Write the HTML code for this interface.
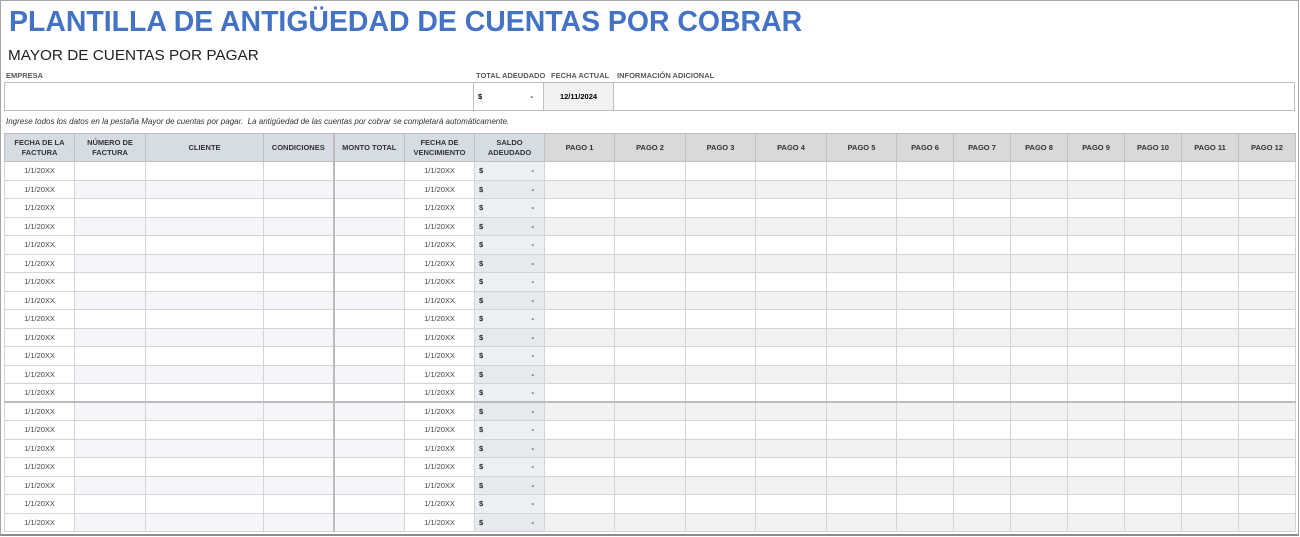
<!DOCTYPE html>
<html><head><meta charset="utf-8"><style>
*{margin:0;padding:0;box-sizing:border-box}
body{width:1300px;height:537px;background:#fff;font-family:"Liberation Sans",sans-serif;position:relative;overflow:hidden}
.frame{position:absolute;left:0;top:0;width:1299px;height:536px;border:1px solid #a6a6a6;border-bottom:2px solid #8c8c8c}
.title{position:absolute;left:9px;top:6px;font-size:29px;font-weight:bold;color:#4472c4;white-space:nowrap;transform-origin:0 0;transform:scaleX(0.98)}
.sub{position:absolute;left:8px;top:47px;font-size:15px;color:#222;white-space:nowrap;transform-origin:0 0;transform:scaleX(1.02)}
.lbl{position:absolute;top:71px;font-size:7.5px;font-weight:bold;color:#595959;white-space:nowrap}
.box{position:absolute;top:82px;height:29px;border:1px solid #bfbfbf;border-left:none}
.note{position:absolute;left:6px;top:117px;font-size:8px;font-style:italic;color:#333;white-space:nowrap}
table{position:absolute;left:4px;top:133px;border-collapse:collapse;table-layout:fixed;width:1291px}
td,th{border:1px solid #d4d4d4;font-size:7.5px;height:18.5px;text-align:center;color:#444;white-space:nowrap;overflow:hidden}
th{height:28px;font-weight:bold;color:#333;background:#d6dce4;line-height:10px;border-color:#c0c0c0}
th.p{background:#d9d9d9}
tr.s td.b{background:#f4f6f9}
tr.s td.p{background:#f2f2f2}
td.sa{background:#eceff4;text-align:left;padding:0 10px 0 4px;font-weight:bold;color:#222}
tr.s td.sa{background:#e6e9ee}
td.sa span{float:right}
.tk{border-right:2px solid #bcbcbc}
tr.mid td{border-top:2px solid #bcbcbc}
</style></head><body>
<div class="frame"></div>
<div class="title">PLANTILLA DE ANTIGÜEDAD DE CUENTAS POR COBRAR</div>
<div class="sub">MAYOR DE CUENTAS POR PAGAR</div>
<div class="lbl" style="left:6px">EMPRESA</div>
<div class="lbl" style="left:476px">TOTAL ADEUDADO</div>
<div class="lbl" style="left:551px">FECHA ACTUAL</div>
<div class="lbl" style="left:617px">INFORMACIÓN ADICIONAL</div>
<div class="box" style="left:4px;width:470px;border-left:1px solid #bfbfbf"></div>
<div class="box" style="left:474px;width:70px;font-size:7.5px;font-weight:bold;line-height:27px;padding:0 10px 0 4px">$<span style="float:right">-</span></div>
<div class="box" style="left:544px;width:70px;background:#f2f2f2;font-size:7.5px;font-weight:bold;line-height:27px;text-align:center">12/11/2024</div>
<div class="box" style="left:614px;width:681px"></div>
<div class="note">Ingrese todos los datos en la pestaña Mayor de cuentas por pagar.&nbsp; La antigüedad de las cuentas por cobrar se completará automáticamente.</div>
<table>
<colgroup><col style="width:70px"><col style="width:71px"><col style="width:118px"><col style="width:70px"><col style="width:71px"><col style="width:70px"><col style="width:70px"><col style="width:70px"><col style="width:71px"><col style="width:70px"><col style="width:71px"><col style="width:70px"><col style="width:57px"><col style="width:57px"><col style="width:57px"><col style="width:57px"><col style="width:57px"><col style="width:57px"><col style="width:57px"></colgroup>
<tr><th>FECHA DE LA<br>FACTURA</th><th>NÚMERO DE<br>FACTURA</th><th>CLIENTE</th><th class="tk">CONDICIONES</th><th>MONTO TOTAL</th><th>FECHA DE<br>VENCIMIENTO</th><th>SALDO<br>ADEUDADO</th><th class="p">PAGO 1</th><th class="p">PAGO 2</th><th class="p">PAGO 3</th><th class="p">PAGO 4</th><th class="p">PAGO 5</th><th class="p">PAGO 6</th><th class="p">PAGO 7</th><th class="p">PAGO 8</th><th class="p">PAGO 9</th><th class="p">PAGO 10</th><th class="p">PAGO 11</th><th class="p">PAGO 12</th></tr>
<tbody id="tb"></tbody>
</table>
<script>
var h='';for(var i=0;i<20;i++){h+='<tr class="'+(i%2?'s':'')+(i==13?' mid':'')+'"><td>1/1/20XX</td><td class="b"></td><td class="b"></td><td class="b tk"></td><td class="b"></td><td>1/1/20XX</td><td class="sa">$<span>-</span></td>';for(var j=0;j<12;j++)h+='<td class="p"></td>';h+='</tr>';}
document.getElementById('tb').innerHTML=h;
</script>
</body></html>
